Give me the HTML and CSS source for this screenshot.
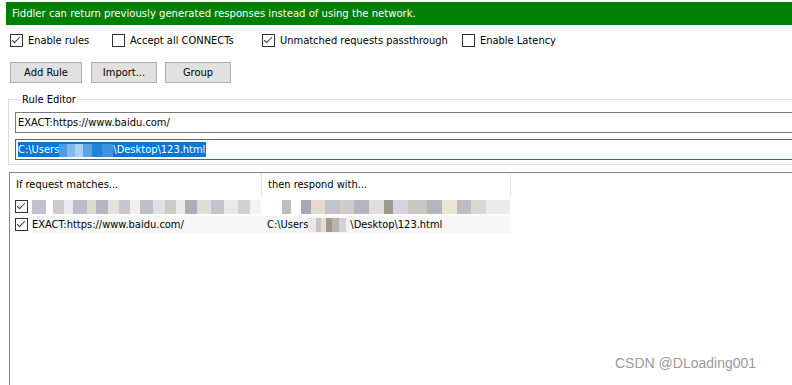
FILE: index.html
```html
<!DOCTYPE html>
<html>
<head>
<meta charset="utf-8">
<link rel="stylesheet" href="styles.css">
</head>
<body>
<div class="banner">Fiddler can return previously generated responses instead of using the network.</div>
<div class="options">
  <label class="opt o1"><span class="cb on"></span>Enable rules</label>
  <label class="opt o2"><span class="cb"></span>Accept all CONNECTs</label>
  <label class="opt o3"><span class="cb on"></span>Unmatched requests passthrough</label>
  <label class="opt"><span class="cb"></span>Enable Latency</label>
</div>
<div class="buttons">
  <button class="btn b1">Add Rule</button>
  <button class="btn b2">Import...</button>
  <button class="btn b3">Group</button>
</div>
<fieldset class="editor">
  <legend>Rule Editor</legend>
  <div class="field">EXACT:https://www.baidu.com/</div>
  <div class="field focus"><span class="sel">C:\Users<span class="blur b-sel"></span>\Desktop\123.html</span></div>
</fieldset>
<div class="list">
  <div class="head">
    <div class="col c1">If request matches...</div>
    <div class="col c2">then respond with...</div>
  </div>
  <div class="row">
    <span class="cb on"></span>
    <div class="cell c1"><span class="mosaic m1"></span></div>
    <div class="cell c2"><span class="mosaic m2"></span></div>
  </div>
  <div class="row hl">
    <span class="cb on"></span>
    <div class="cell c1">EXACT:https://www.baidu.com/</div>
    <div class="cell c2">C:\Users<span class="blur b-row"></span>\Desktop\123.html</div>
  </div>
  <div class="watermark">CSDN @DLoading001</div>
</div>
</body>
</html>
```

FILE: styles.css
```css
html, body {
  margin: 0;
  padding: 0;
  background: #ffffff;
  width: 792px;
  height: 385px;
  overflow: hidden;
}
body {
  font-family: "DejaVu Sans Condensed", "Liberation Sans", sans-serif;
  font-size: 11px;
  color: #000;
}
.banner {
  margin: 2px 0 0 6px;
  height: 23px;
  line-height: 23px;
  background: #008000;
  color: #fff;
  padding-left: 6px;
  font-size: 11.2px;
}
.options {
  display: flex;
  align-items: center;
  margin-top: 8px;
  padding-left: 10px;
  height: 15px;
}
.opt {
  display: flex;
  align-items: center;
  white-space: nowrap;
}
.o1 { width: 102px; }
.o2 { width: 150px; }
.o3 { width: 200px; }
.cb {
  box-sizing: border-box;
  width: 13px;
  height: 13px;
  border: 1px solid #333;
  background: #fff;
  margin-right: 5px;
  position: relative;
  flex: none;
}
.cb.on::after {
  content: "";
  position: absolute;
  left: 3px;
  top: 0px;
  width: 3px;
  height: 7px;
  border-right: 1.3px solid #333;
  border-bottom: 1.3px solid #333;
  transform: rotate(45deg);
}
.buttons {
  display: flex;
  margin-top: 14px;
  padding-left: 10px;
  gap: 8px;
}
.btn {
  font: inherit;
  height: 21px;
  background: #e1e1e1;
  border: 1px solid #adadad;
  padding: 0;
  color: #000;
}
.b1 { width: 72px; }
.b2 { width: 66px; margin-left: 1px; }
.b3 { width: 66px; }
.editor {
  margin: 10px 0 0 8px;
  border: 1px solid #dcdcdc;
  border-right: none;
  padding: 6px 0 4px 6px;
  min-width: 0;
}
.editor legend {
  padding: 0 2px;
  margin-left: 5px;
  line-height: 13px;
}
.field {
  box-sizing: border-box;
  height: 21px;
  border: 1px solid #7a7a7a;
  border-right: none;
  line-height: 19px;
  padding-left: 2px;
  white-space: nowrap;
}
.field.focus {
  margin-top: 6px;
  border-color: #0078d7;
}
.sel {
  background: #0078d7;
  color: #fff;
  display: inline-block;
  line-height: 15px;
  padding-right: 1px;
}
.blur {
  display: inline-block;
  vertical-align: middle;
  height: 13px;
}
.b-sel {
  width: 54px;
  background: linear-gradient(90deg, #4a9ee6 0 14%, #7fbbf0 14% 30%, #a9d0f5 30% 45%, #5aa5e8 45% 62%, #1f85dc 62% 80%, #3b94e0 80%);
}
.b-row {
  width: 42px;
  height: 14px;
  background: linear-gradient(90deg, #e8e8e8 0 18%, #c9c4c0 18% 30%, #e0dcdc 30% 44%, #9e968c 44% 56%, #b9b4b4 56% 74%, #d4d0d8 74% 90%, #f0f0f0 90%);
}
.list {
  margin: 7px 0 0 9px;
  border: 1px solid #828790;
  border-right: none;
  border-bottom: none;
  height: 212px;
  position: relative;
}
.head {
  display: flex;
  height: 24px;
  align-items: center;
}
.col {
  box-sizing: border-box;
  height: 24px;
  line-height: 24px;
  padding-left: 6px;
  border-right: 1px solid #e5e5e5;
  white-space: nowrap;
}
.head .c1 { width: 252px; }
.head .c2 { width: 249px; }
.row {
  display: flex;
  align-items: center;
  height: 17px;
  padding-left: 5px;
  margin-top: 1px;
}
.row .cb { margin-right: 3px; }
.cell {
  box-sizing: border-box;
  height: 17px;
  line-height: 17px;
  white-space: nowrap;
  overflow: hidden;
}
.row .c1 { width: 230px; padding-left: 1px; }
.row .c2 { width: 249px; padding-left: 6px; }
.row.hl .c1, .row.hl .c2 { background: #f7f7f7; }
.mosaic {
  display: block;
  height: 14px;
  margin-top: 2px;
}
.m1 {
  background:
    linear-gradient(90deg, #b8b4c8 0 6%, #fff 6% 9%, #c8c0c0 9% 14%, #e6e6ec 14% 18%, #b0b0c0 18% 24%, #d8d4cc 24% 28%, #a8a8b8 28% 33%, #e0dcd8 33% 38%, #c0bcc8 38% 43%, #f0ece8 43% 47%, #b4b4bc 47% 53%, #dcd8e0 53% 58%, #c4c0b8 58% 63%, #e8e8e8 63% 67%, #a0a0ac 67% 72%, #d8d8d0 72% 78%, #bcb8c4 78% 84%, #e8e4e0 84% 90%, #c8c8c8 90% 95%, #f0f0f0 95%);
  opacity: 0.85;
}
.m2 {
  background:
    linear-gradient(90deg, #fff 0 6%, #b8b0b0 6% 10%, #fff 10% 14%, #9898a8 14% 18%, #e0d4c4 18% 24%, #b8b8c0 24% 30%, #c8c4bc 30% 36%, #a8a8b4 36% 42%, #dcd8d4 42% 48%, #8c8878 48% 52%, #d0ccd8 52% 58%, #c0bcb4 58% 66%, #a8a8b0 66% 72%, #e8e0d0 72% 78%, #b0b0b8 78% 84%, #d4d0c8 84% 90%, #e8e8e8 90%);
  opacity: 0.85;
}
.watermark {
  position: absolute;
  left: 605px;
  top: 182px;
  font-family: "Liberation Sans", sans-serif;
  font-size: 14px;
  color: #9a9a9a;
  white-space: nowrap;
}
```
